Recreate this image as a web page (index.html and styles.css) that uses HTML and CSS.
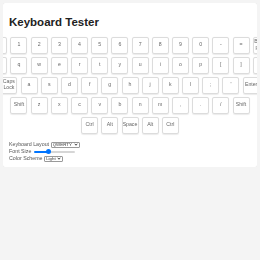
FILE: index.html
```html
<!DOCTYPE html>
<html lang="en">
<head>
    <meta charset="UTF-8">
    <meta name="viewport" content="width=device-width, initial-scale=1.0">
    <title>Keyboard Tester</title>
    <link rel="stylesheet" href="styles.css">
</head>
<body>
    <div class="container">
        <h1>Keyboard Tester</h1>

        <div class="keyboard">
            <div class="row">
                <div class="key">`</div>
                <div class="key">1</div>
                <div class="key">2</div>
                <div class="key">3</div>
                <div class="key">4</div>
                <div class="key">5</div>
                <div class="key">6</div>
                <div class="key">7</div>
                <div class="key">8</div>
                <div class="key">9</div>
                <div class="key">0</div>
                <div class="key">-</div>
                <div class="key">=</div>
                <div class="key">Backspace</div>
            </div>
            <div class="row">
                <div class="key">Tab</div>
                <div class="key">q</div>
                <div class="key">w</div>
                <div class="key">e</div>
                <div class="key">r</div>
                <div class="key">t</div>
                <div class="key">y</div>
                <div class="key">u</div>
                <div class="key">i</div>
                <div class="key">o</div>
                <div class="key">p</div>
                <div class="key">[</div>
                <div class="key">]</div>
                <div class="key">\</div>
            </div>
            <div class="row">
                <div class="key">Caps Lock</div>
                <div class="key">a</div>
                <div class="key">s</div>
                <div class="key">d</div>
                <div class="key">f</div>
                <div class="key">g</div>
                <div class="key">h</div>
                <div class="key">j</div>
                <div class="key">k</div>
                <div class="key">l</div>
                <div class="key">;</div>
                <div class="key">'</div>
                <div class="key">Enter</div>
            </div>
            <div class="row">
                <div class="key">Shift</div>
                <div class="key">z</div>
                <div class="key">x</div>
                <div class="key">c</div>
                <div class="key">v</div>
                <div class="key">b</div>
                <div class="key">n</div>
                <div class="key">m</div>
                <div class="key">,</div>
                <div class="key">.</div>
                <div class="key">/</div>
                <div class="key">Shift</div>
            </div>
            <div class="row">
                <div class="key">Ctrl</div>
                <div class="key">Alt</div>
                <div class="key">Space</div>
                <div class="key">Alt</div>
                <div class="key">Ctrl</div>
            </div>
        </div>

        <div class="settings">
            <div class="setting">
                <label for="layout-select">Keyboard Layout</label>
                <select id="layout-select">
                    <option>QWERTY</option>
                    <option>AZERTY</option>
                    <option>Dvorak</option>
                </select>
            </div>
            <div class="setting">
                <label for="font-size-slider">Font Size</label>
                <input type="range" id="font-size-slider" min="12" max="24" value="16">
            </div>
            <div class="setting">
                <label for="scheme-select">Color Scheme</label>
                <select id="scheme-select">
                    <option>Light</option>
                    <option>Dark</option>
                </select>
            </div>
        </div>
    </div>
</body>
</html>
```

FILE: styles.css
```css
body {
    font-family: "Liberation Sans", Arial, sans-serif;
    margin: 3px;
    background-color: #f4f4f4;
    color: #333;
}

.container {
    background-color: #fff;
    padding: 6px 6px 5px;
    border-radius: 2px;
    box-shadow: 0 0 2px rgba(0,0,0,0.12);
}

.container h1 {
    font-size: 11.5px;
    margin: 7px 0 6.5px;
    color: #222;
}

.keyboard {
    display: flex;
    flex-direction: column;
    will-change: transform; /* grayscale text at this tiny size */
}

.row {
    display: flex;
    justify-content: center;
}

.key {
    flex: none;
    width: 17px;
    height: 17px;
    margin: 1.5px 1.6px;
    box-sizing: border-box;
    border: 1px solid #dcdcdc;
    border-radius: 2px;
    box-shadow: 0 0.5px 1px rgba(0,0,0,0.08);
    background-color: #fff;
    display: flex;
    align-items: center;
    justify-content: center;
    text-align: center;
    font-size: 5.2px;
    line-height: 1.1;
    color: #666;
    word-break: break-all;
    overflow: hidden;
}

.settings {
    margin-top: 6px;
    will-change: transform;
}

.setting {
    font-size: 5.3px;
    line-height: 7px;
    height: 7px;
    color: #555;
    display: flex;
    align-items: center;
    gap: 1.6px;
}

.setting select {
    -webkit-appearance: none;
    appearance: none;
    font-family: "Liberation Sans", Arial, sans-serif;
    font-size: 4.4px;
    line-height: 4px;
    height: 6px;
    padding: 0 6px 0 1px;
    border: 1px solid #9a9a9a;
    border-radius: 1px;
    color: #333;
    background-color: #fff;
    background-image: url("data:image/svg+xml,%3Csvg xmlns='http://www.w3.org/2000/svg' viewBox='0 0 8 6'%3E%3Cpath d='M1.5 1.5l2.5 3 2.5-3' fill='none' stroke='%23222' stroke-width='1.6'/%3E%3C/svg%3E");
    background-repeat: no-repeat;
    background-position: right 1px center;
    background-size: 4px 3px;
}

#font-size-slider {
    -webkit-appearance: none;
    appearance: none;
    width: 41px;
    height: 2px;
    margin: 0 0 0 1px;
    border-radius: 1px;
    background: linear-gradient(to right, #0075ff 0 34%, #d6d6d6 34% 100%);
}
#font-size-slider::-webkit-slider-thumb {
    -webkit-appearance: none;
    width: 5px;
    height: 5px;
    border-radius: 50%;
    background-color: #0075ff;
}
```
